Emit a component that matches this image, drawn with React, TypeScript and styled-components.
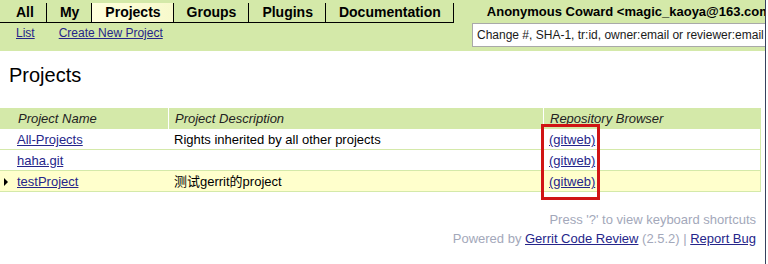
import React from 'react';
import styled, {createGlobalStyle} from "styled-components";

const GREEN = '#d4e9a9';
const LINK = '#25258a';

const GlobalStyle = createGlobalStyle`
    html, body {
        margin: 0;
        padding: 0;
        background: #ffffff;
    }
    body {
        font-family: "Liberation Sans", Arial, "Noto Sans CJK SC", sans-serif;
        color: #000000;
    }
`

const tabs = ['All', 'My', 'Projects', 'Groups', 'Plugins', 'Documentation'];

const projects = [
    {name: 'All-Projects', description: 'Rights inherited by all other projects', current: false},
    {name: 'haha.git', description: '', current: false},
    {name: 'testProject', description: '测试gerrit的project', current: true},
];

export default function App() {
    return (
        <Frame>
            <GlobalStyle/>
            <Page>
                <Header>
                    <TopRow>
                        <TabBar>
                            {tabs.map((t, i) => (
                                <Tab key={t} $active={t === 'Projects'} $first={i === 0}>{t}</Tab>
                            ))}
                        </TabBar>
                        <UserName>Anonymous Coward &lt;magic_kaoya@163.com&gt;</UserName>
                    </TopRow>
                    <SubRow>
                        <SubMenu>
                            <SubLink href="#">List</SubLink>
                            <SubLink href="#">Create New Project</SubLink>
                        </SubMenu>
                        <SearchBox>Change #, SHA-1, tr:id, owner:email or reviewer:email</SearchBox>
                    </SubRow>
                </Header>

                <Title>Projects</Title>

                <TableWrap>
                    <HeadRow>
                        <HeadCell/>
                        <HeadCell>Project Name</HeadCell>
                        <HeadCell>Project Description</HeadCell>
                        <HeadCell>Repository Browser</HeadCell>
                    </HeadRow>
                    {projects.map(p => (
                        <DataRow key={p.name} $current={p.current}>
                            <PointerCell>{p.current && <Pointer/>}</PointerCell>
                            <Cell><Link href="#">{p.name}</Link></Cell>
                            <Cell>{p.description}</Cell>
                            <Cell><Link href="#">(gitweb)</Link></Cell>
                        </DataRow>
                    ))}
                    <Highlight/>
                </TableWrap>

                <Footer>
                    <FooterLine>Press '?' to view keyboard shortcuts</FooterLine>
                    <FooterLine>
                        Powered by <Link href="#">Gerrit Code Review</Link> (2.5.2) | <Link href="#">Report Bug</Link>
                    </FooterLine>
                </Footer>
            </Page>
            <Edge/>
        </Frame>
    );
}

const Frame = styled.div`
    display: flex;
    width: 768px;
    height: 264px;
    overflow: hidden;
`

const Page = styled.div`
    flex: 0 0 765px;
    width: 765px;
    height: 264px;
    overflow: hidden;
`

const Edge = styled.div`
    flex: 0 0 1px;
    background: #36425e;
`

const Header = styled.div`
    background: ${GREEN};
    height: 51px;
`

const TopRow = styled.div`
    display: flex;
    align-items: flex-start;
    height: 23px;
    white-space: nowrap;
`

const TabBar = styled.div`
    display: flex;
    flex-shrink: 0;
    padding-top: 3px;
    border-bottom: 1px solid #000000;
`

const Tab = styled.div<{ $active?: boolean; $first?: boolean }>`
    height: 19px;
    line-height: 19px;
    padding: 0 12px 0 ${p => p.$first ? '16px' : '13px'};
    font-size: 14px;
    font-weight: 700;
    border-right: 1px solid #000000;
    background: ${p => p.$active ? 'linear-gradient(to right, #ffffdc, #f7f9cc)' : 'transparent'};
`

const UserName = styled.div`
    flex-shrink: 0;
    margin-left: 33px;
    padding-top: 4px;
    font-size: 13px;
    font-weight: 700;
    line-height: 16px;
    white-space: nowrap;
`

const SubRow = styled.div`
    display: flex;
    align-items: flex-start;
`

const SubMenu = styled.div`
    display: flex;
    flex: 0 0 456px;
    gap: 24px;
    padding: 3px 0 0 16px;
    font-size: 12px;
    line-height: 15px;
`

const SubLink = styled.a`
    color: ${LINK};
    text-decoration: underline;
`

const SearchBox = styled.div`
    flex: 0 0 320px;
    height: 22px;
    line-height: 22px;
    padding-left: 4px;
    background: #ffffff;
    border: 1px solid #a9a9a9;
    font-size: 12px;
    color: #1a1a1a;
    white-space: nowrap;
    overflow: hidden;
`

const Title = styled.h1`
    margin: 12px 0 21px 9px;
    font-size: 20px;
    font-weight: 400;
    line-height: 24px;
`

const TableWrap = styled.div`
    position: relative;
    width: 761px;
    font-size: 13px;
`

const HeadRow = styled.div`
    display: grid;
    grid-template-columns: 11px 156px 374px 216px;
    column-gap: 1px;
    height: 21px;
    background: #ffffff;
    border-right: 1px solid ${GREEN};
`

const HeadCell = styled.div`
    background: ${GREEN};
    padding: 0 6px;
    line-height: 21px;
    font-style: italic;
    color: #222222;
    white-space: nowrap;
`

const DataRow = styled.div<{ $current?: boolean }>`
    display: grid;
    grid-template-columns: 11px 156px 374px 216px;
    column-gap: 1px;
    height: 20px;
    background: ${p => p.$current ? '#ffffcc' : '#ffffff'};
    border-right: 1px solid ${GREEN};
    border-bottom: 1px solid ${GREEN};
`

const Cell = styled.div`
    padding: 0 5px;
    line-height: 21px;
    white-space: nowrap;
`

const PointerCell = styled.div`
    display: flex;
    align-items: center;
    padding-left: 4px;
`

const Pointer = styled.span`
    width: 0;
    height: 0;
    border-left: 4px solid #000000;
    border-top: 4px solid transparent;
    border-bottom: 4px solid transparent;
`

const Link = styled.a`
    color: ${LINK};
    text-decoration: underline;
`

const Highlight = styled.div`
    position: absolute;
    left: 541px;
    top: 16px;
    width: 53px;
    height: 70px;
    border: 3px solid #d01414;
    pointer-events: none;
`

const Footer = styled.div`
    margin-top: 18px;
    padding-right: 9px;
    text-align: right;
    font-size: 13px;
    line-height: 19px;
    color: #a3a8ba;
`

const FooterLine = styled.div`
`
